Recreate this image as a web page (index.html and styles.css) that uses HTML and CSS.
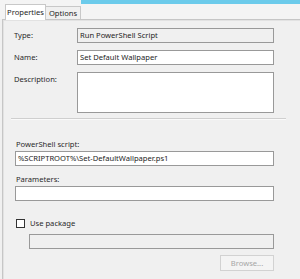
FILE: index.html
```html
<!DOCTYPE html>
<html>
<head>
<meta charset="utf-8">
<link rel="stylesheet" href="styles.css">
</head>
<body>
<div class="window">
  <div class="tabbar">
    <div class="tabs">
      <div class="tab tab-active">Properties</div>
      <div class="tab tab-inactive">Options</div>
    </div>
    <div class="titlestrip"></div>
  </div>
  <div class="panel">
    <div class="row">
      <div class="label">Type:</div>
      <div class="box box-readonly">Run PowerShell Script</div>
    </div>
    <div class="row">
      <div class="label">Name:</div>
      <div class="box">Set Default Wallpaper</div>
    </div>
    <div class="row row-top">
      <div class="label label-top">Description:</div>
      <div class="box box-multi"></div>
    </div>
    <div class="separator"></div>
    <div class="lower">
      <div class="label stack-label">PowerShell script:</div>
      <div class="box box-wide">%SCRIPTROOT%\Set-DefaultWallpaper.ps1</div>
      <div class="label stack-label params">Parameters:</div>
      <div class="box box-wide"></div>
      <div class="check-row">
        <span class="checkbox"></span>
        <span class="label">Use package</span>
      </div>
      <div class="box box-readonly box-package"></div>
      <div class="btn-row">
        <div class="button">Browse...</div>
      </div>
    </div>
  </div>
</div>
</body>
</html>
```
FILE: styles.css
```css
html, body {
  margin: 0;
  padding: 0;
}
body {
  width: 300px;
  height: 279px;
  overflow: hidden;
  background: #f0f0f0;
  font-family: "Noto Sans", "Open Sans", sans-serif;
  font-size: 7.6px;
  color: #1e1e1e;
}
.window {
  width: 300px;
  height: 279px;
  display: flex;
  flex-direction: column;
}
.tabbar {
  height: 19px;
  display: flex;
  background: #f4f4f4;
}
.tabs {
  display: flex;
  align-items: flex-end;
  padding-left: 5px;
}
.tab {
  box-sizing: border-box;
  line-height: 12px;
  white-space: nowrap;
  text-align: center;
}
.tab-active {
  width: 41px;
  height: 16px;
  background: #ffffff;
  border: 1px solid #c8c8c8;
  border-bottom: none;
  padding-top: 1px;
  position: relative;
  z-index: 1;
  margin-bottom: -1px;
}
.tab-inactive {
  height: 13px;
  width: 35px;
  background: #f0f0f0;
  border: 1px solid #c8c8c8;
  border-left: none;
  border-bottom: none;
}
.titlestrip {
  flex: 1;
  height: 4px;
  background: #6ccbeb;
}
.panel {
  flex: 1;
  margin-left: 2px;
  border-left: 1px solid #c6c6c6;
  border-top: 1px solid #c6c6c6;
  box-shadow: inset 1px 1px 0 #e2e2e2;
  padding: 8px 0 0 11px;
}
.row {
  display: grid;
  grid-template-columns: 63px 197px;
  align-items: center;
  margin-bottom: 7px;
}
.row-top {
  align-items: start;
}
.label {
  color: #2a2a2a;
  line-height: 11px;
  white-space: nowrap;
}
.label-top {
  padding-top: 2px;
}
.box {
  box-sizing: border-box;
  height: 15px;
  border: 1px solid #999999;
  background: #ffffff;
  padding: 0 2px;
  line-height: 13px;
  white-space: nowrap;
  overflow: hidden;
}
.box-readonly {
  background: #f0f0f0;
}
.box-multi {
  height: 41px;
}
.separator {
  margin: -2px 0 0 -3px;
  width: 275px;
  height: 1px;
  background: #cfcfcf;
  border-bottom: 1px solid #fafafa;
}
.lower {
  padding-left: 1px;
  display: flex;
  flex-direction: column;
  align-items: flex-start;
}
.stack-label {
  margin-top: 19px;
  margin-left: 1px;
  margin-bottom: 1px;
}
.params {
  margin-top: 8px;
}
.box-wide {
  width: 259px;
}
.check-row {
  display: flex;
  align-items: center;
  margin-top: 17px;
  margin-left: 1px;
  gap: 5px;
}
.checkbox {
  box-sizing: border-box;
  width: 9px;
  height: 9px;
  border: 1px solid #333333;
  background: #ffffff;
}
.box-package {
  margin-top: 5px;
  margin-left: 14px;
  width: 245px;
}
.btn-row {
  width: 259px;
  display: flex;
  justify-content: flex-end;
  margin-top: 6px;
}
.button {
  box-sizing: border-box;
  width: 54px;
  height: 16px;
  border: 1px solid #d2d2d2;
  background: #f4f4f4;
  color: #a6a6a6;
  text-align: center;
  line-height: 14px;
}
```
